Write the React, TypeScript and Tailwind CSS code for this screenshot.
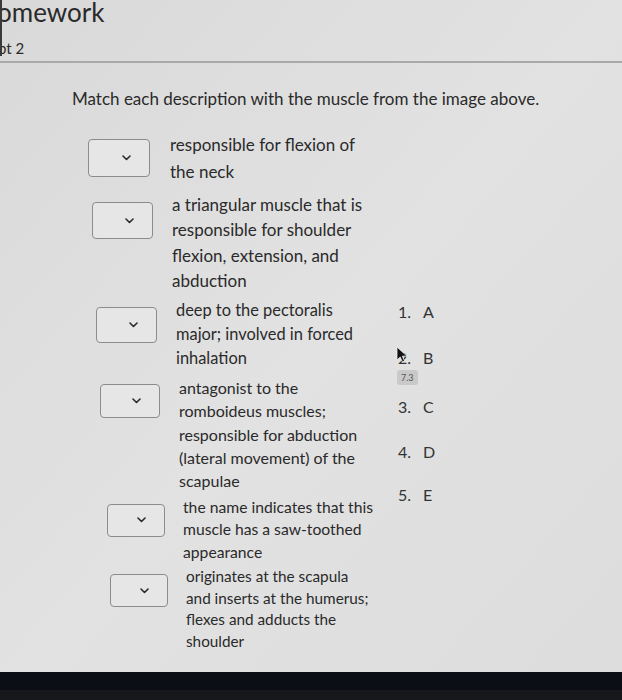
import React from "react";

type Row = {
  lines: string[];
  wrap: string;
  box: string;
  text: string;
};

const rows: Row[] = [
  {
    lines: ["responsible for flexion of", "the neck"],
    wrap: "ml-[88px] mt-[21px] gap-[20px]",
    box: "w-[62px] h-[38px] mt-[8px]",
    text: "text-[17px] leading-[27px]",
  },
  {
    lines: [
      "a triangular muscle that is",
      "responsible for shoulder",
      "flexion, extension, and",
      "abduction",
    ],
    wrap: "ml-[92px] mt-[7px] gap-[19px]",
    box: "w-[61px] h-[37px] mt-[10px]",
    text: "text-[17px] leading-[25.3px]",
  },
  {
    lines: ["deep to the pectoralis", "major; involved in forced", "inhalation"],
    wrap: "ml-[96px] mt-[5px] gap-[19px]",
    box: "w-[61px] h-[36px] mt-[9px]",
    text: "text-[16.4px] leading-[24px]",
  },
  {
    lines: [
      "antagonist to the",
      "romboideus muscles;",
      "responsible for abduction",
      "(lateral movement) of the",
      "scapulae",
    ],
    wrap: "ml-[100px] mt-[6px] gap-[19px]",
    box: "w-[60px] h-[34px] mt-[8px]",
    text: "text-[16px] leading-[23.3px]",
  },
  {
    lines: ["the name indicates that this", "muscle has a saw-toothed", "appearance"],
    wrap: "ml-[107px] mt-[3px] gap-[18px]",
    box: "w-[58px] h-[33px] mt-[8px]",
    text: "text-[15.7px] leading-[22.5px]",
  },
  {
    lines: [
      "originates at the scapula",
      "and inserts at the humerus;",
      "flexes and adducts the",
      "shoulder",
    ],
    wrap: "ml-[110px] mt-[3px] gap-[18px]",
    box: "w-[58px] h-[33px] mt-[8px]",
    text: "text-[15.3px] leading-[21.5px]",
  },
];

const answers = [
  { n: "1.", l: "A", cls: "mt-[240px]" },
  { n: "2.", l: "B", cls: "mt-[28px]" },
  { n: "3.", l: "C", cls: "mt-[31px]" },
  { n: "4.", l: "D", cls: "mt-[27px]" },
  { n: "5.", l: "E", cls: "mt-[25px]" },
];

const Select: React.FC<{ cls: string }> = ({ cls }) => (
  <div
    className={`${cls} shrink-0 rounded-[4px] border border-[#8c8c8c] bg-[#e6e6e6] flex items-center justify-end pr-[18px]`}
  >
    <svg width="9" height="6" viewBox="0 0 9 6" fill="none">
      <path d="M1 1l3.5 3.5L8 1" stroke="#2b2b2b" strokeWidth="1.6" strokeLinecap="round" strokeLinejoin="round" />
    </svg>
  </div>
);

export default function App() {
  return (
    <div className="h-[700px] w-[622px] overflow-hidden flex flex-col bg-gradient-to-br from-[#d9d9d9] via-[#e2e2e2] to-[#dcdcdc] text-[#2a2a2a] font-['Lato','Liberation_Sans',sans-serif]">
      <div className="flex-1 flex flex-col">
        <div className="overflow-hidden border-l-[2px] border-[#3a3a3a]">
          <div className="text-[26px] leading-[26px] -ml-[5px] mt-[-1px] text-[#2a2a2a]">omework</div>
          <div className="text-[15px] leading-[15px] -ml-[4px] mt-[16px]">pt 2</div>
        </div>
        <div className="mt-[5px] h-[2px] bg-[#a9a9a9]" />
        <div className="flex">
          <div className="w-[398px] shrink-0">
            <div className="ml-[72px] mt-[25px] text-[17px] leading-[22px] whitespace-nowrap">
              Match each description with the muscle from the image above.
            </div>
            {rows.map((r, i) => (
              <div key={i} className={`flex items-start ${r.wrap}`}>
                <Select cls={r.box} />
                <div className={`${r.text} whitespace-nowrap`}>
                  {r.lines.map((t, j) => (
                    <div key={j}>{t}</div>
                  ))}
                </div>
              </div>
            ))}
          </div>
          <div className="flex flex-col text-[16px] leading-[18px] text-[#333]">
            {answers.map((a, i) => (
              <div key={i} className={`relative flex gap-[12px] ${a.cls}`}>
                <span>{a.n}</span>
                <span>{a.l}</span>
                {i === 1 && (
                  <>
                    <svg
                      className="absolute left-[-2px] top-[-3px]"
                      width="12"
                      height="18"
                      viewBox="0 0 12 18"
                    >
                      <path d="M1 1v13l3.2-3 2.3 5 2-1-2.2-4.8H11z" fill="#111" stroke="#eee" strokeWidth="0.8" />
                    </svg>
                    <div className="absolute left-[-1px] top-[21px] rounded-[3px] bg-[#c9c9c9] px-[4px] text-[9px] leading-[15px] text-[#555]">
                      7.3
                    </div>
                  </>
                )}
              </div>
            ))}
          </div>
        </div>
      </div>
      <div className="h-[28px] flex flex-col">
        <div className="h-[18px] bg-[#0b0e15]" />
        <div className="flex-1 bg-[#17181c]" />
      </div>
    </div>
  );
}
